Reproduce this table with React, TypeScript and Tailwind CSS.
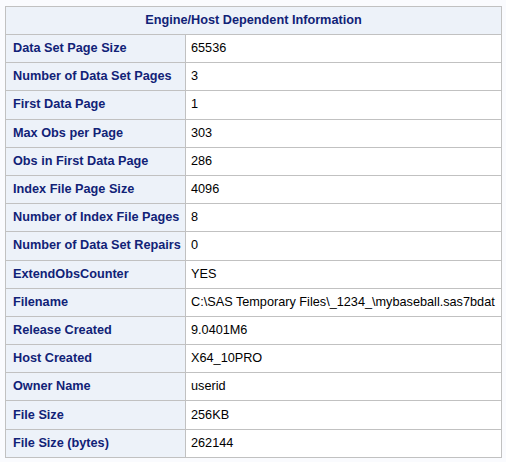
import React from "react";

const rows: [string, string][] = [
  ["Data Set Page Size", "65536"],
  ["Number of Data Set Pages", "3"],
  ["First Data Page", "1"],
  ["Max Obs per Page", "303"],
  ["Obs in First Data Page", "286"],
  ["Index File Page Size", "4096"],
  ["Number of Index File Pages", "8"],
  ["Number of Data Set Repairs", "0"],
  ["ExtendObsCounter", "YES"],
  ["Filename", "C:\\SAS Temporary Files\\_1234_\\mybaseball.sas7bdat"],
  ["Release Created", "9.0401M6"],
  ["Host Created", "X64_10PRO"],
  ["Owner Name", "userid"],
  ["File Size", "256KB"],
  ["File Size (bytes)", "262144"],
];

export default function App() {
  return (
    <div
      className="w-[506px] h-[462px] bg-[#fafbfe] pt-[6px] pl-[5px]"
      style={{ fontFamily: "'Liberation Sans', Arial, sans-serif" }}
    >
      <table className="table-fixed border-collapse w-[497px] text-[12.7px] border border-[#c1c1c1]">
        <colgroup>
          <col className="w-[180px]" />
          <col />
        </colgroup>
        <thead>
          <tr className="h-[28px]">
            <th
              colSpan={2}
              className="bg-[#edf2f9] text-[#112277] font-bold text-center border border-[#c1c1c1] px-[6px]"
            >
              Engine/Host Dependent Information
            </th>
          </tr>
        </thead>
        <tbody>
          {rows.map(([k, v]) => (
            <tr key={k} className="h-[28.2px]">
              <th className="bg-[#edf2f9] text-[#112277] font-bold text-left border border-[#c1c1c1] pl-[7px] pr-[2px] whitespace-nowrap">
                {k}
              </th>
              <td className="bg-white text-black text-left border border-[#c1c1c1] pl-[5px] pr-[2px] whitespace-nowrap">
                {v}
              </td>
            </tr>
          ))}
        </tbody>
      </table>
    </div>
  );
}
